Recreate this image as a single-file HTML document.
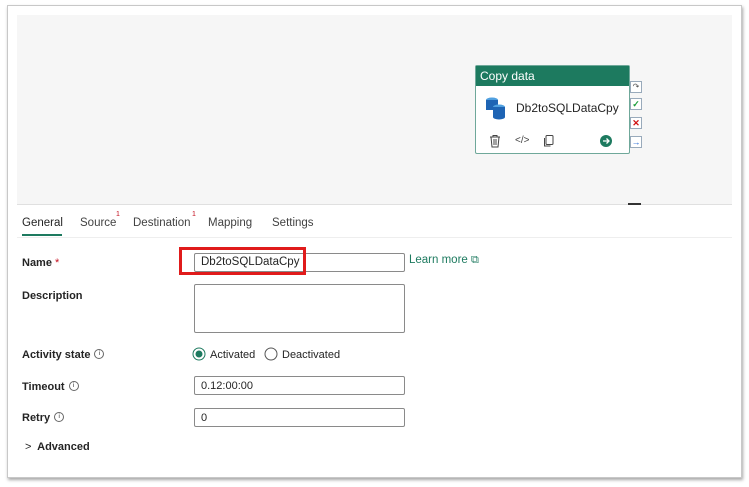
<!DOCTYPE html>
<html><head><style>
body{margin:0;width:749px;height:487px;background:#fff;position:relative;overflow:hidden;font-family:"Liberation Sans",sans-serif;color:#242424}
.a{position:absolute}
.frame{left:7px;top:5px;width:733px;height:471px;border:1px solid #c8c8c8;box-shadow:1px 2px 3px rgba(0,0,0,.35)}
.canvas{left:17px;top:15px;width:715px;height:189px;background:#f6f6f6;border-bottom:1px solid #e0e0e0}
.lbl{font-size:11px;font-weight:bold;color:#242424}
.inp{border:1px solid #8a8a8a;border-radius:2px;background:#fff;font-size:11px;box-sizing:border-box;padding:3px 6px}
.tab{font-size:11.5px;top:217px;color:#424242}
.sup{font-size:7px;color:#c50f1f}
.info{display:inline-block;width:8px;height:8px;border:1px solid #666;border-radius:50%;font-size:6px;line-height:8px;text-align:center;vertical-align:top;margin-left:4px;font-weight:normal}
</style></head><body>
<div class="a frame"></div>
<div class="a canvas"></div>
<div class="a" style="left:628px;top:203px;width:13px;height:2px;background:#333"></div>
<!-- card -->
<div class="a" style="left:475px;top:65px;width:153px;height:87px;border:1px solid #6fa89a;background:#fff;border-radius:2px"></div>
<div class="a" style="left:476px;top:66px;width:153px;height:20px;background:#1d7a5f;color:#fff;font-size:12px;line-height:20px;padding-left:4px;box-sizing:border-box">Copy data</div>
<svg class="a" style="left:485px;top:96px" width="22" height="24"><ellipse cx="7" cy="4" rx="6" ry="2.5" fill="#50a0e0"/><rect x="1" y="4" width="12" height="10" fill="#1e64b4"/><ellipse cx="14" cy="11" rx="6" ry="2.5" fill="#50a0e0"/><rect x="8" y="11" width="12" height="10" fill="#1e64b4"/><ellipse cx="14" cy="21" rx="6" ry="2.5" fill="#1e64b4"/></svg>
<div class="a" style="left:516px;top:101px;font-size:12px">Db2toSQLDataCpy</div>
<svg class="a" style="left:488px;top:134px" width="14" height="14" fill="none" stroke="#444" stroke-width="1"><path d="M2 3h10M5 3V1.5h4V3M3 3l1 10h6l1-10M6 5v6M8 5v6"/></svg>
<div class="a" style="left:515px;top:135px;font-size:10px;color:#444">&lt;/&gt;</div>
<svg class="a" style="left:542px;top:134px" width="14" height="14" fill="none" stroke="#444"><rect x="4" y="1.5" width="7" height="9" rx="1"/><path d="M2.5 4v8h6"/></svg>
<svg class="a" style="left:599px;top:134px" width="14" height="14"><circle cx="7" cy="7" r="6" fill="#1d7a5f"/><path d="M4 7h6M7.5 4.5L10 7 7.5 9.5" stroke="#fff" stroke-width="1.3" fill="none"/></svg>
<div class="a" style="left:630px;top:81px;width:10px;height:10px;border:1px solid #9ab;background:#fff;font-size:8px;line-height:10px;text-align:center;color:#555">↷</div>
<div class="a" style="left:630px;top:98px;width:10px;height:10px;border:1px solid #9ab;background:#fff;font-size:9px;line-height:10px;text-align:center;color:#1a9e3a;font-weight:bold">✓</div>
<div class="a" style="left:630px;top:117px;width:10px;height:10px;border:1px solid #9ab;background:#fff;font-size:9px;line-height:10px;text-align:center;color:#d01010;font-weight:bold">✕</div>
<div class="a" style="left:630px;top:136px;width:10px;height:10px;border:1px solid #9ab;background:#fff;font-size:9px;line-height:10px;text-align:center;color:#1e64d4">→</div>
<!-- tabs -->
<div class="a tab" style="left:22px;color:#242424">General</div>
<div class="a" style="left:22px;top:234px;width:40px;height:2px;background:#1d7a5f"></div>
<div class="a tab" style="left:80px">Source</div><div class="a sup" style="left:116px;top:211px">1</div>
<div class="a tab" style="left:133px">Destination</div><div class="a sup" style="left:192px;top:211px">1</div>
<div class="a tab" style="left:208px">Mapping</div>
<div class="a tab" style="left:272px">Settings</div>
<div class="a" style="left:17px;top:237px;width:715px;height:1px;background:#eee"></div>
<!-- fields -->
<div class="a lbl" style="left:22px;top:257px">Name <span style="color:#c50f1f;font-weight:normal">*</span></div>
<div class="a inp" style="left:194px;top:253px;width:211px;height:19px;padding-top:2px;font-size:11.5px">Db2toSQLDataCpy</div>
<div class="a" style="left:179px;top:247px;width:127px;height:28px;border:3px solid #e01b1b;box-sizing:border-box"></div>
<div class="a" style="left:409px;top:254px;font-size:11.5px;color:#1d7a5f">Learn more <span style="font-size:11px">⧉</span></div>
<div class="a lbl" style="left:22px;top:290px">Description</div>
<div class="a inp" style="left:194px;top:284px;width:211px;height:49px"></div>
<div class="a lbl" style="left:22px;top:349px">Activity state<span class="info">i</span></div>
<svg class="a" style="left:192px;top:347px" width="14" height="14"><circle cx="7" cy="7" r="6" fill="#fff" stroke="#1d7a5f"/><circle cx="7" cy="7" r="3.5" fill="#1d7a5f"/></svg>
<div class="a" style="left:210px;top:349px;font-size:11px">Activated</div>
<svg class="a" style="left:264px;top:347px" width="14" height="14"><circle cx="7" cy="7" r="6" fill="#fff" stroke="#555"/></svg>
<div class="a" style="left:282px;top:349px;font-size:11px">Deactivated</div>
<div class="a lbl" style="left:22px;top:381px">Timeout<span class="info">i</span></div>
<div class="a inp" style="left:194px;top:376px;width:211px;height:19px">0.12:00:00</div>
<div class="a lbl" style="left:22px;top:412px">Retry<span class="info">i</span></div>
<div class="a inp" style="left:194px;top:408px;width:211px;height:19px">0</div>
<div class="a lbl" style="left:25px;top:441px"><span style="font-weight:normal">&gt;</span>&nbsp; Advanced</div>
</body></html>
